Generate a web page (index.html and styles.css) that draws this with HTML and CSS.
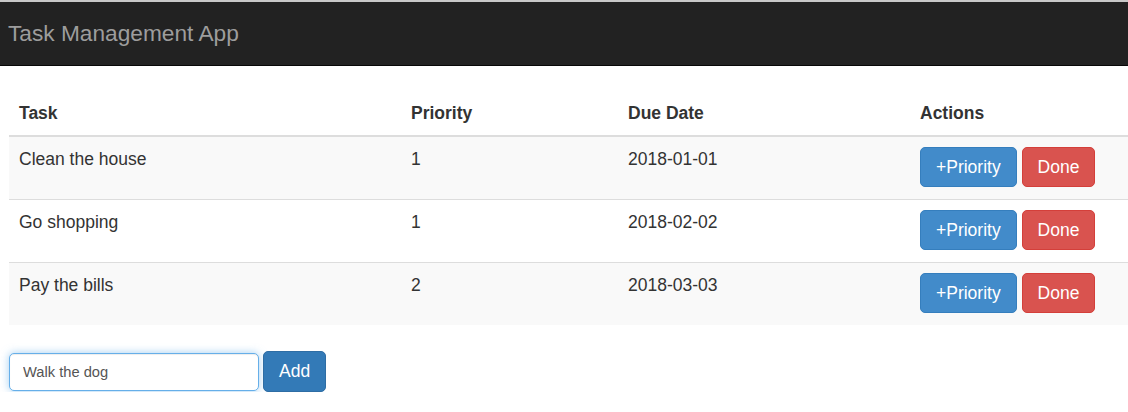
FILE: index.html
```html
<!DOCTYPE html>
<html lang="en">
  <head>
    <meta charset="UTF-8" />
    <meta name="viewport" content="width=device-width, initial-scale=1.0" />
    <title>Task Management App</title>
    <link rel="stylesheet" href="styles.css">
  </head>
  <body>
    <nav class="navbar">
      <span class="brand">Task Management App</span>
    </nav>
    <main>
      <table class="tasks">
        <colgroup>
          <col class="col-task" />
          <col class="col-priority" />
          <col class="col-due" />
          <col />
        </colgroup>
        <thead>
          <tr>
            <th>Task</th>
            <th>Priority</th>
            <th>Due Date</th>
            <th>Actions</th>
          </tr>
        </thead>
        <tbody>
          <tr>
            <td>Clean the house</td>
            <td>1</td>
            <td>2018-01-01</td>
            <td>
              <button class="btn btn-priority">+Priority</button>
              <button class="btn btn-done">Done</button>
            </td>
          </tr>
          <tr>
            <td>Go shopping</td>
            <td>1</td>
            <td>2018-02-02</td>
            <td>
              <button class="btn btn-priority">+Priority</button>
              <button class="btn btn-done">Done</button>
            </td>
          </tr>
          <tr>
            <td>Pay the bills</td>
            <td>2</td>
            <td>2018-03-03</td>
            <td>
              <button class="btn btn-priority">+Priority</button>
              <button class="btn btn-done">Done</button>
            </td>
          </tr>
        </tbody>
      </table>
      <form class="add-form">
        <input type="text" class="task-input" value="Walk the dog" />
        <button type="submit" class="btn btn-add">Add</button>
      </form>
    </main>
  </body>
</html>
```

FILE: styles.css
```css
body {
  margin: 0;
  border-top: 2px solid #c8c8c8;
  font-family: "Liberation Sans", Arial, sans-serif;
  font-size: 17.5px;
  line-height: 25px;
  color: #333;
  background: #fff;
}

.navbar {
  height: 63px;
  background: #222;
  border-bottom: 1px solid #080808;
  display: flex;
  align-items: center;
  padding: 0 8px;
}

.brand {
  font-size: 22.7px;
  color: #9d9d9d;
}

main {
  padding: 25px 0 0 9px;
}

.tasks {
  width: 100%;
  border-collapse: collapse;
  border-spacing: 0;
  margin-bottom: 26px;
}

.col-task {
  width: 392px;
}

.col-priority {
  width: 217px;
}

.col-due {
  width: 292px;
}

.tasks th {
  text-align: left;
  font-weight: bold;
  padding: 10px 10px 9px;
  border-bottom: 2px solid #ddd;
}

.tasks td {
  vertical-align: top;
  padding: 10px 10px 12px;
  border-top: 1px solid #ddd;
}

.tasks tbody tr:first-child td {
  border-top: 0;
}

.tasks tbody tr:nth-child(odd) {
  background: #f9f9f9;
}

.btn {
  font-family: inherit;
  font-size: 17.5px;
  line-height: 25px;
  padding: 6.5px 15px;
  border: 1px solid transparent;
  border-radius: 5px;
  color: #fff;
  cursor: pointer;
  vertical-align: top;
}

.btn-priority {
  background: #428bca;
  border-color: #357ebd;
}

.btn-done {
  background: #d9534f;
  border-color: #d43f3a;
}

.add-form {
  display: flex;
  align-items: center;
  gap: 4px;
}

.task-input {
  width: 250px;
  height: 38px;
  box-sizing: border-box;
  padding: 0 13px;
  font-family: inherit;
  font-size: 14.7px;
  color: #555;
  border: 1px solid #66afe9;
  border-radius: 5px;
  outline: 0;
  box-shadow: inset 0 1px 1px rgba(0, 0, 0, .075), 0 0 8px rgba(102, 175, 233, .6);
}

.btn-add {
  height: 41px;
  padding: 0 15px;
  background: #337ab7;
  border-color: #2e6da4;
}
```
